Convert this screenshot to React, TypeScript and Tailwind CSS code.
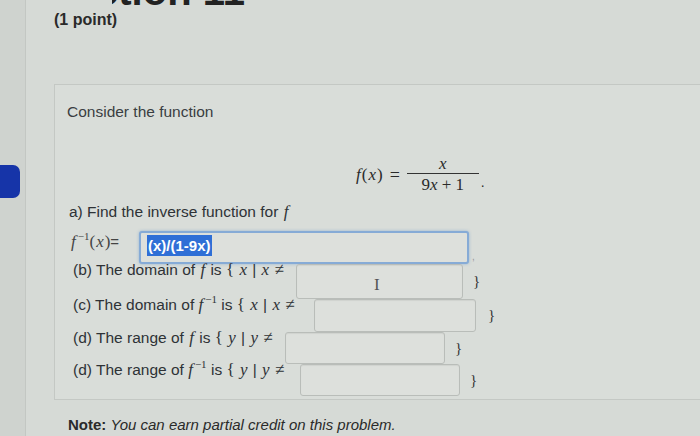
import React from "react";

const sans = "font-['Liberation_Sans',Arial,sans-serif]";
const serif = "font-['Liberation_Serif','DejaVu_Serif',serif] italic";

function M({ children }: { children: React.ReactNode }) {
  return <span className={`${serif} text-[17px] px-[1px]`}>{children}</span>;
}

function P({ children }: { children: React.ReactNode }) {
  return <span className={`${serif} not-italic text-[17px]`}>{children}</span>;
}

function FInv() {
  return (
    <span className={`${serif} text-[17px]`}>
      f<sup className="not-italic text-[11px] -top-[7px] ml-[2px]">−1</sup>
    </span>
  );
}

function Answer({ width, brace }: { width: string; brace: string }) {
  return (
    <div className="flex h-full items-start">
      <div className={`${width} h-full rounded-[3px] border border-[#b9bdb9] bg-[#dde0dc] shadow-[inset_0_1px_1px_rgba(0,0,0,0.06)]`} />
      <span className={`${brace} ${serif} not-italic text-[15px] text-[#333] self-center`}>{"}"}</span>
    </div>
  );
}

function Label({ width, children }: { width: string; children: React.ReactNode }) {
  return (
    <div className={`flex h-[12px] ${width} shrink-0 items-center whitespace-nowrap pl-[6px] text-[15.5px]`}>
      {children}
    </div>
  );
}

export default function App() {
  return (
    <div className={`flex h-[436px] w-[700px] overflow-hidden bg-[#d6dad6] text-[#2e3236] ${sans}`}>
      {/* left rail */}
      <div className="flex w-[26px] shrink-0 flex-col border-r border-[#c3c7c3] bg-[#cfd3cf]">
        <div className="mt-[165px] h-[33px] w-[20px] rounded-r-[7px] bg-[#1634a8]" />
      </div>

      <div className="flex min-w-0 flex-1 flex-col pl-[28px]">
        {/* page heading, mostly scrolled out of view */}
        <div className="relative h-[8px] shrink-0 overflow-hidden">
          <div className="absolute -top-[29px] left-[58px] flex w-[133px] justify-end overflow-hidden whitespace-nowrap text-[40px] font-bold leading-[40px] text-[#222]">
            Section 11
          </div>
        </div>

        <div className="mt-[2px] shrink-0 text-[16px] font-bold leading-[20px] text-[#2a2a2a]">(1 point)</div>

        <div className="mt-[54px] flex shrink-0 flex-col border-b border-l border-t border-[#c4c8c4] bg-[#d9ddd9] pb-[3px] pl-[12px] pt-[18px]">
          <div className="text-[15.5px] leading-[18px] text-[#3a3e42]">Consider the function</div>

          {/* formula */}
          <div className="mt-[33px] flex items-center pl-[288px] text-[#2a2a2a]">
            <M>f</M>
            <P>(</P>
            <M>x</M>
            <P>)</P>
            <span className={`${serif} not-italic mx-[7px] text-[18px]`}>=</span>
            <div className="flex flex-col items-center">
              <span className={`${serif} text-[17px] leading-[19px]`}>x</span>
              <div className="h-px w-[72px] bg-[#333]" />
              <span className={`${serif} text-[17px] leading-[22px] not-italic`}>
                9<i>x</i>&nbsp;+&nbsp;1
              </span>
            </div>
            <span className="ml-[2px] mt-[14px] text-[14px]">.</span>
          </div>

          {/* a */}
          <div className="mt-[6px] flex h-[20px] items-center pl-[2px] text-[15.5px]">
            a) Find the inverse function for&nbsp;<M>f</M>
          </div>
          <div className="mt-[9px] flex h-[33px] items-start">
            <div className="flex h-[22px] w-[72px] shrink-0 items-center pl-[4px] text-[15px] text-[#444]">
              <FInv />
              <P>(</P>
              <M>x</M>
              <P>)</P>=
            </div>
            <div className="flex h-full items-start">
              <div className="h-full w-[330px] rounded-[3px] border-2 border-[#86abd6] bg-[#dde0dc] pl-[6px] pt-[1px] shadow-[0_0_3px_rgba(80,140,210,0.5)]">
                <span className="inline-block bg-[#2f6fd6] px-[1px] text-[15px] font-bold leading-[21px] text-white">(x)/(1-9x)</span>
              </div>
              <span className="ml-[3px] mt-[18px] text-[10px] text-[#999]">,</span>
            </div>
          </div>

          {/* b */}
          <div className="flex h-[35px] items-start">
            <Label width="w-[229px]">
              (b) The domain of&nbsp;<M>f</M>&nbsp;is&nbsp;<P>{"{"}</P>&nbsp;<M>x</M>&nbsp;|&nbsp;<M>x</M>&nbsp;<P>≠</P>
            </Label>
            <div className="relative h-full">
              <Answer width="w-[167px]" brace="ml-[10px]" />
              <span className={`absolute left-[78px] top-[8px] ${serif} not-italic text-[17px] text-[#555]`}>I</span>
            </div>
          </div>

          {/* c */}
          <div className="flex h-[33px] items-start">
            <Label width="w-[247px]">
              (c) The domain of&nbsp;<FInv />&nbsp;is&nbsp;<P>{"{"}</P>&nbsp;<M>x</M>&nbsp;|&nbsp;<M>x</M>&nbsp;<P>≠</P>
            </Label>
            <Answer width="w-[162px]" brace="ml-[12px]" />
          </div>

          {/* d */}
          <div className="flex h-[32px] items-start">
            <Label width="w-[218px]">
              (d) The range of&nbsp;<M>f</M>&nbsp;is&nbsp;<P>{"{"}</P>&nbsp;<M>y</M>&nbsp;|&nbsp;<M>y</M>&nbsp;<P>≠</P>
            </Label>
            <Answer width="w-[160px]" brace="ml-[10px]" />
          </div>

          {/* d2 */}
          <div className="flex h-[32px] items-start">
            <Label width="w-[233px]">
              (d) The range of&nbsp;<FInv />&nbsp;is&nbsp;<P>{"{"}</P>&nbsp;<M>y</M>&nbsp;|&nbsp;<M>y</M>&nbsp;<P>≠</P>
            </Label>
            <Answer width="w-[160px]" brace="ml-[10px]" />
          </div>
        </div>

        <div className="shrink-0 pl-[14px] pt-[16px] text-[15px] leading-[18px] text-[#2a2a2a]">
          <b>Note:</b> <i>You can earn partial credit on this problem.</i>
        </div>
      </div>
    </div>
  );
}
